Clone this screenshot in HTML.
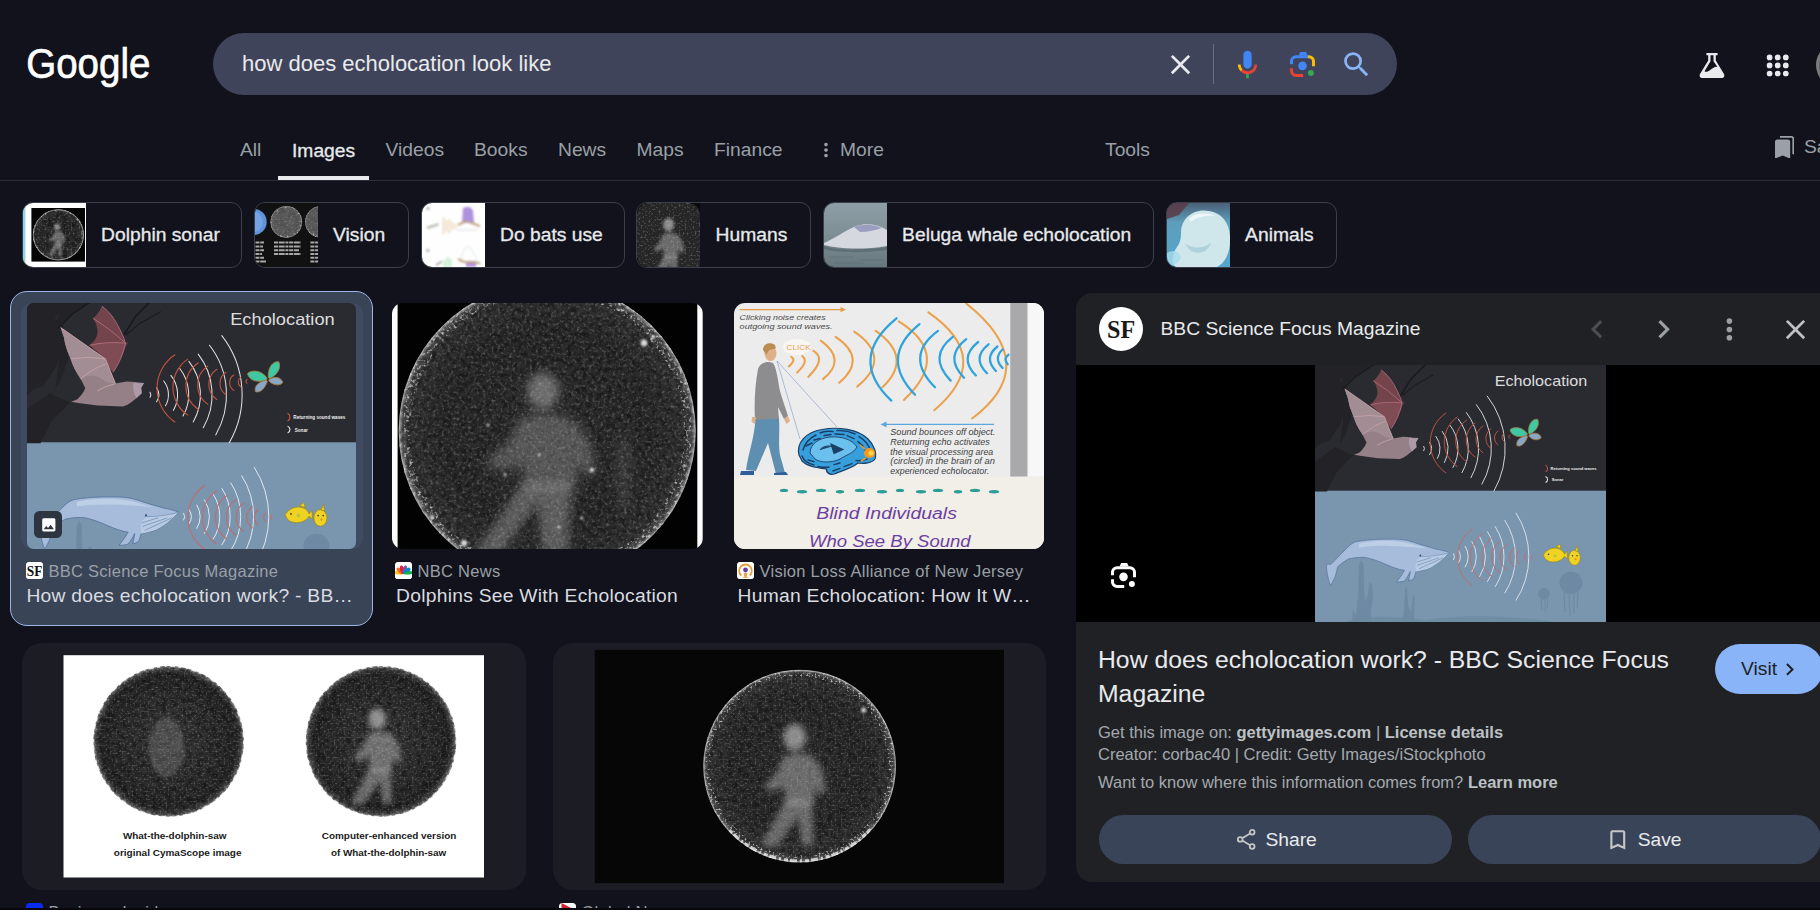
<!DOCTYPE html>
<html lang="en">
<head>
<meta charset="utf-8">
<title>how does echolocation look like - Google Search</title>
<style>
*{box-sizing:border-box;margin:0;padding:0}
html,body{width:1820px;height:910px;overflow:hidden;background:#11121b}
body{position:relative;font-family:"Liberation Sans",sans-serif;color:#e8eaed}
.abs{position:absolute}
svg{display:block}
#sb{position:absolute;left:213px;top:33px;width:1184px;height:62px;border-radius:31px;background:#40445a}
#sb .q{position:absolute;left:29px;top:0;line-height:61px;font-size:22px;color:#e8eaed;white-space:nowrap}
#sb .dv{position:absolute;left:1000px;top:11px;width:1px;height:40px;background:#6a6e80}
#tabs{position:absolute;left:0;top:120px;width:1820px;height:61px;border-bottom:1px solid #2b2d36}
#tabs span{position:absolute;top:17px;font-size:19.25px;line-height:25px;color:#9aa0a6;white-space:nowrap}
#tabs span.on{color:#e8eaed;top:17.8px;-webkit-text-stroke:.3px #e8eaed}
#tabs .ul{position:absolute;left:278px;top:56px;width:91px;height:4px;background:#e8eaed}
.chip{position:absolute;top:202px;height:66px;border:1px solid #3b3e4b;border-radius:11px;overflow:hidden;background:#11121b}
.chip .th{position:absolute;left:0;top:0;width:63px;height:64px;overflow:hidden}
.chip .tx{position:absolute;left:78.6px;top:0;line-height:63px;font-size:19.25px;color:#e8eaed;white-space:nowrap;-webkit-text-stroke:.3px #e8eaed}
.img{position:absolute;overflow:hidden;border-radius:11px}
.src{position:absolute;font-size:16.5px;letter-spacing:.27px;line-height:20px;color:#9aa0a6;white-space:nowrap}
.ttl{position:absolute;font-size:19.25px;letter-spacing:.27px;line-height:24px;color:#dadce0;white-space:nowrap;overflow:hidden;text-overflow:ellipsis}
.fav{position:absolute;width:17px;height:17px;border-radius:3.5px;overflow:hidden;background:#fff}
#sel{position:absolute;left:10px;top:291px;width:363px;height:335px;border-radius:17px;background:#394457;border:1.5px solid #9bb6e4}
.card{position:absolute;background:#1b1c24;border-radius:20px;overflow:hidden}
#panel{position:absolute;left:1076px;top:293px;width:800px;height:589px;background:#202124;border-radius:16px;overflow:hidden}
#panel .blk{position:absolute;left:0;top:72px;width:800px;height:257px;background:#000}
#panel .nm{position:absolute;left:84.5px;top:23px;font-size:19.25px;line-height:25px;color:#e8eaed;white-space:nowrap}
#panel .av{position:absolute;left:22.8px;top:13.7px;width:44.2px;height:44.2px;border-radius:50%;background:#fff}
#panel .h1{position:absolute;left:22px;top:350.2px;font-size:24.75px;line-height:33.4px;color:#e8eaed;white-space:nowrap}
#panel .meta{position:absolute;left:22px;font-size:16.5px;line-height:22px;color:#a4a9af;white-space:nowrap}
#panel .meta b{color:#bdc1c6;font-weight:700}
.btn{position:absolute;top:522px;height:49px;border-radius:25px;background:#394458}
.btn span{position:absolute;top:0;line-height:50.2px;font-size:19.25px;color:#e8eaed}
#visit{position:absolute;left:639px;top:351px;width:107.5px;height:50px;border-radius:25px;background:#8ab4f8}
#visit span{position:absolute;left:26px;top:0;line-height:49.5px;font-size:19.25px;color:#202124}
#bot{position:absolute;left:0;top:908px;width:1820px;height:2px;background:#08080c}
</style>
</head>
<body>
<svg width="0" height="0" style="position:absolute"><defs><filter id="nz" x="0" y="0" width="100%" height="100%" color-interpolation-filters="sRGB"><feTurbulence type="fractalNoise" baseFrequency=".34" numOctaves="2" seed="7" result="t"/><feColorMatrix in="t" type="matrix" values="0 0 0 0 1 0 0 0 0 1 0 0 0 0 1 3.4 0 0 0 -1.75" result="a"/><feComposite in="a" in2="SourceGraphic" operator="in"/></filter><filter id="nzf" x="0" y="0" width="100%" height="100%" color-interpolation-filters="sRGB"><feTurbulence type="fractalNoise" baseFrequency=".5" numOctaves="2" seed="11" result="t"/><feColorMatrix in="t" type="matrix" values="0 0 0 0 1 0 0 0 0 1 0 0 0 0 1 3.6 0 0 0 -1.85" result="a"/><feComposite in="a" in2="SourceGraphic" operator="in"/></filter><filter id="nzd" x="0" y="0" width="100%" height="100%" color-interpolation-filters="sRGB"><feTurbulence type="fractalNoise" baseFrequency=".2" numOctaves="2" seed="23" result="t"/><feColorMatrix in="t" type="matrix" values="0 0 0 0 0 0 0 0 0 0 0 0 0 0 0 0 2.6 0 0 -0.95" result="a"/><feComposite in="a" in2="SourceGraphic" operator="in"/></filter><filter id="bl" x="-30%" y="-30%" width="160%" height="160%"><feGaussianBlur stdDeviation="5"/></filter><filter id="bl2" x="-30%" y="-30%" width="160%" height="160%"><feGaussianBlur stdDeviation="1.8"/></filter><filter id="bl25" x="-30%" y="-30%" width="160%" height="160%"><feGaussianBlur stdDeviation="2.6"/></filter><filter id="bl3" x="-30%" y="-30%" width="160%" height="160%"><feGaussianBlur stdDeviation="3.2"/></filter><filter id="bl1" x="-30%" y="-30%" width="160%" height="160%"><feGaussianBlur stdDeviation=".9"/></filter><radialGradient id="disc" cx=".5" cy=".5" r=".5"><stop offset="0" stop-color="#2f2f2f"/><stop offset=".7" stop-color="#2a2a2a"/><stop offset=".93" stop-color="#343434"/><stop offset=".975" stop-color="#555"/><stop offset=".992" stop-color="#a0a0a0"/><stop offset="1" stop-color="#5a5a5a"/></radialGradient><radialGradient id="discw" cx=".5" cy=".5" r=".5"><stop offset="0" stop-color="#3a3a3a"/><stop offset=".7" stop-color="#2c2c2c"/><stop offset=".9" stop-color="#262626"/><stop offset=".97" stop-color="#4a4a4a"/><stop offset="1" stop-color="#9a9a9a"/></radialGradient><symbol id="man" viewBox="0 0 100 100" overflow="visible"><g fill="#c9c9c9"><ellipse cx="47.5" cy="35" rx="5.8" ry="6.8" opacity=".62"/><path d="M41 46C45 42.5 53 42.5 57.5 46 62 51 64 58 63 64 61.5 66 59 64 58 60L57 70 42.5 70 42 60C39 62 36 64 32.5 62 31.5 59 35 57 38 54Z" opacity=".42"/><path d="M42.5 68 56.5 68 57 91 51 91 49.5 76 38 92 30 91Z" opacity=".42"/></g></symbol></defs><symbol id="echo" viewBox="0 0 291 256" preserveAspectRatio="none"><rect width="291" height="126" fill="#2a2b31"/><rect y="125.2" width="291" height="131" fill="#7a96ae"/><g fill="#222227"><path d="M0 0H36L30 8 20 22 14 40 10 62 6 78 0 84Z"/><path d="M8 20 22 14 32 22 30 40 26 58 14 76 6 78 12 50Z"/><path d="M28 30 40 34 36 52 30 70 25 78 28 56Z"/><path d="M22 0H60L44 8 30 20 24 24 28 12Z"/><path d="M0 96 20 82 38 90 22 106 12 126H0Z"/></g><g stroke="#1a1a1e" fill="none" stroke-linecap="round"><path d="M110 0 96 14 86 30" stroke-width="1.6"/><path d="M118 10 100 20 88 30" stroke-width="1"/><path d="M58 0 40 12 28 24" stroke-width="1.4"/></g><path d="M66.3 5Q76 12 82.2 25.7 86 33 87.1 37.6L89.6 37.1 87.6 39.5Q84 52 76.2 63.4L72 58 69.3 51.5 55.4 39.6Q62 34 62.5 28 62 20 58.4 15.8 63 12 66.3 5Z" fill="#74444c"/><path d="M87.1 37.6Q70 36 55.4 39.6L69.3 51.5 72 58 76.2 63.4Q84 52 87.1 37.6Z" fill="#84505a" opacity=".7"/><path d="M66.3 5Q76 12 82.2 25.7 86 33 87.1 37.6Q84 52 76.2 63.4M87.1 37.6Q72 24 58.4 15.8M87.1 37.6Q70 36 55.4 39.6" stroke="#b06e78" stroke-width=".8" fill="none"/><path d="M29.7 23.8 69.3 51.5 78.2 73.3 88 71.5 96 72 100 73.5 103.5 72.8 101 77 101.5 82 97 86 92 90Q88 93 84.8 93.7L62.7 92.8 45 90.5 39 89.4 44.6 87.1Q50 82 51.5 77.2L47.5 69.3Q41 60 38.6 51.5 34 42 32.7 32.7Z" fill="#948086"/><path d="M29.7 23.8 69.3 51.5 78.2 73.3 70 72Q58 62 47.5 69.3 41 60 38.6 51.5 34 42 32.7 32.7Z" fill="#a18d93"/><path d="M29.7 23.8 69.3 51.5 78.2 73.3M69.3 51.5Q54 49 38.6 51.5M70 56Q58 60 47.5 69.3M78.2 73.3Q68 76 62 80" stroke="#c8a2a8" stroke-width=".8" fill="none"/><path d="M94 73Q99 72 103.5 72.8L101 77 101.5 82 97 86Q93 80 94 73Z" fill="#b2a0b0" opacity=".8"/><g fill="none" stroke="#e4e4e4" stroke-width="0.9" stroke-linecap="round" opacity="1.0"><path d="M108.8 81.0A4.0 4.0 0 0 1 108.8 85.4"/><path d="M114.6 77.0A11.0 11.0 0 0 1 114.6 89.4"/><path d="M120.9 71.1A19.6 19.6 0 0 1 122.5 93.0"/><path d="M127.3 66.1A27.7 27.7 0 0 1 129.5 97.0"/><path d="M135.1 60.1A37.5 37.5 0 0 1 138.0 102.0"/><path d="M143.2 53.7A47.9 47.9 0 0 1 147.0 107.2"/><path d="M151.4 47.4A58.2 58.2 0 0 1 155.9 112.3"/><path d="M161.4 39.5A70.9 70.9 0 0 1 166.9 118.7"/><path d="M172.3 31.0A84.8 84.8 0 0 1 178.9 125.6"/></g><g fill="none" stroke="#c4533d" stroke-width="0.95" stroke-linecap="round" opacity="1.0"><path d="M130.8 107.3A35.8 35.8 0 0 1 130.8 47.9"/><path d="M142.2 101.2A29.8 29.8 0 0 1 142.2 51.8"/><path d="M151.5 96.2A24.8 24.8 0 0 1 151.5 55.0"/><path d="M160.0 91.7A20.3 20.3 0 0 1 160.0 57.9"/><path d="M167.9 87.4A16.1 16.1 0 0 1 167.9 60.7"/><path d="M175.9 83.1A11.9 11.9 0 0 1 175.9 63.4"/><path d="M182.9 79.4A8.2 8.2 0 0 1 182.9 65.8"/><path d="M189.0 76.1A4.9 4.9 0 0 1 189.0 67.9"/><path d="M194.6 73.1A2.0 2.0 0 0 1 194.6 69.8"/></g><g stroke="#a87a42" stroke-width=".9" transform="translate(213 69.5) scale(.88) translate(-213 -69.5)"><path d="M212 68C206 60 196 60 192.5 64 195 72 204 73 212 70Z" fill="#3fc9a2"/><path d="M213.5 67C213 58 218 51 224 52 227 58 222 66 214.5 69Z" fill="#3fc9a2"/><path d="M211.5 70.5C204 72 199 76 200.5 82 206 84 211 77 212.5 71.5Z" fill="#89a6c4"/><path d="M214.5 69.5C221 66 227 68 228 73 224 77 217 75 214 71Z" fill="#89a6c4"/></g><text x="179.7" y="21.3" font-family="Liberation Sans, sans-serif" font-size="15.3" fill="#dedede" textLength="92.5" lengthAdjust="spacingAndGlyphs">Echolocation</text><path d="M230.5 99.5A4 4 0 0 1 230.5 106.5" stroke="#c9553f" stroke-width="1" fill="none"/><path d="M230.5 111A3.2 3.2 0 0 1 230.5 117" stroke="#e6e6e6" stroke-width="1" fill="none"/><text x="235.6" y="104.9" font-family="Liberation Sans, sans-serif" font-size="4.3" font-weight="700" fill="#ededed" textLength="46" lengthAdjust="spacingAndGlyphs">Returning sound waves</text><text x="236.8" y="116" font-family="Liberation Sans, sans-serif" font-size="4.3" font-weight="700" fill="#ededed" textLength="11.5" lengthAdjust="spacingAndGlyphs">Sonar</text><g fill="#6d89a3"><path d="M37 256 38 244 41 250 43.5 224 43.8 200 46 194 48.5 198 49 222 50 236 53 228 54.5 217 57 218 58 232 55.5 246 57 256Z"/><path d="M87 256 89 246 90.2 222 92 221 93.2 240 96 246 98 229 99.6 230 99 256Z"/><ellipse cx="256" cy="217" rx="11.5" ry="11"/><path d="M249 226 250 246M254 227 255 250M259 227 259 248M263 226 262 242" stroke="#6d89a3" stroke-width="1.2" fill="none"/><ellipse cx="229" cy="228" rx="5.8" ry="5.8"/><path d="M226 233 227 244M230 234 230 246M233 233 232 242" stroke="#6d89a3" stroke-width="1" fill="none"/><path d="M30 256C50 249 80 250 110 254 150 248 200 250 240 256Z" opacity=".75"/></g><path d="M133.9 186.7C130 185.2 125 184 120.6 183.3 114 181.2 108 179.6 103.3 178.1 99 176.6 95 175.4 91.8 174.6 86 173.6 80 173.3 74.5 173.5 68 173.4 62 173.5 57.2 174 51 174.4 45 175 39.9 176.3 36 178 33 181 30.6 183.8 27 187 24 190.4 21.4 193.1 19 195.6 17 197.6 15.6 198.6 14 198.2 12.6 198.2 11.6 198.8 11.2 203 12.4 212 15.6 219.6 17.4 217 19 213.6 20.3 210.4 21.4 207 22 204 22.6 201.1 26 198 30 195 34.1 193.1 40 191.6 46 191.4 51.4 191.9 58 193.4 64 195.6 68.7 197.7 73 199.6 77 201.2 80.2 202.3 83 203.4 86.5 204.2 89.5 204.6 87 209 84 213 81.4 216.1 84.5 216.4 87.5 215.8 89.5 215 92 212 93.8 209 95.2 205.7 94.8 209 94.2 212.4 93.5 215 95.6 214.6 97.4 213.8 98.7 212.7 99.8 210.4 100.6 208 101 205.7 106 205 110.6 204 114.8 202.3 119 199.8 123 197.2 126.4 194.2 129.4 191.6 132 189.2 133.9 186.7Z" fill="#a7bcda" stroke="#52719b" stroke-width=".7" stroke-linejoin="round"/><path d="M44 178C52 175.6 66 174.6 78 175.2 90 176 102 179.4 112 182.6 100 181.6 86 180.4 74 180.2 62 180 52 180.6 44 182Z" fill="#c3d5ea" opacity=".75"/><path d="M101 205.7C106 205 110.6 204 114.8 202.3 119 199.8 123 197.2 126.4 194.2 129.4 191.6 132 189.2 133.9 186.7 128 188.6 120 189.6 112 189.8 108 190.2 104.6 191.6 102 194 100 198 100.4 202 101 205.7Z" fill="#b9cbe4"/><path d="M104 190.8C112 191 124 189.8 133.4 187.2M104 203 128 192M102 199.6 124 192M101.6 196.4 116 191.8" stroke="#6181ab" stroke-width=".55" fill="none"/><circle cx="105.3" cy="189.6" r=".9" fill="#2c456b"/><g fill="none" stroke="#e6ebf1" stroke-width="0.85" stroke-linecap="round" opacity="1.0"><path d="M138.6 188.0A5.2 5.2 0 0 1 138.6 193.8"/><path d="M143.4 184.7A11.0 11.0 0 0 1 143.4 197.1"/><path d="M150.2 180.6A19.0 19.0 0 0 1 150.2 201.2"/><path d="M157.0 176.1A27.1 27.1 0 0 1 157.0 205.7"/><path d="M164.7 171.1A36.3 36.3 0 0 1 164.7 210.7"/><path d="M172.5 166.1A45.6 45.6 0 0 1 172.5 215.7"/><path d="M180.3 161.1A54.8 54.8 0 0 1 180.3 220.7"/><path d="M189.9 154.8A66.3 66.3 0 0 1 189.9 227.0"/><path d="M201.1 147.5A79.6 79.6 0 0 1 201.1 234.3"/></g><g fill="none" stroke="#c26a6c" stroke-width="0.95" stroke-linecap="round" opacity="1.0"><path d="M157.3 219.6A33.8 33.8 0 0 1 157.3 163.4"/><path d="M167.6 215.0A28.3 28.3 0 0 1 167.6 168.0"/><path d="M176.9 210.8A23.3 23.3 0 0 1 176.9 172.2"/><path d="M184.8 207.3A19.1 19.1 0 0 1 184.8 175.7"/><path d="M191.8 204.2A15.3 15.3 0 0 1 191.8 178.8"/><path d="M199.3 200.8A11.3 11.3 0 0 1 199.3 182.2"/><path d="M204.8 198.4A8.3 8.3 0 0 1 204.8 184.6"/><path d="M211.4 195.4A4.7 4.7 0 0 1 211.4 187.6"/><path d="M216.5 193.2A2.0 2.0 0 0 1 216.5 189.8"/></g><g stroke="#9a8410" stroke-width=".6"><path d="M228.5 189C232 183 240 180.5 246 184 248 185.5 249 187 249.5 188.5L252 185.5 252.5 193 249.5 190.5C247 195 240 197.5 234 195.5 231 194.5 229 192 228.5 189Z" fill="#f0d322"/><path d="M241 181 245 178.5 246 183Z" fill="#f0d322"/><ellipse cx="259.5" cy="192" rx="5.8" ry="7.4" fill="#f0d322"/><path d="M260 185 262.5 180 263 186Z" fill="#f0d322"/></g><circle cx="233.5" cy="188.5" r=".8" fill="#333"/><circle cx="257.5" cy="190" r=".7" fill="#333"/><circle cx="262" cy="190" r=".7" fill="#333"/><circle cx="240" cy="190" r="1.6" fill="#9fc04a" opacity=".7"/><circle cx="260.5" cy="193.5" r="1" fill="#d9722a" opacity=".8"/></symbol></svg>
<svg class="abs" style="left:24px;top:40px" width="130" height="52" viewBox="0 0 130 52"><text x="2.2" y="38.1" font-family="Liberation Sans, sans-serif" font-size="42.8" fill="#fff" stroke="#fff" stroke-width=".7" textLength="124.2" lengthAdjust="spacingAndGlyphs">Google</text></svg>
<div id="sb"><div class="q">how does echolocation look like</div><div class="dv"></div></div>
<svg class="abs" style="left:1164px;top:48px" width="33" height="33" viewBox="0 0 24 24" ><path d="M19 6.41L17.59 5 12 10.59 6.41 5 5 6.41 10.59 12 5 17.59 6.41 19 12 13.41 17.59 19 19 17.59 13.41 12z" fill="#e8eaed"/></svg><svg class="abs" style="left:1231px;top:48px" width="33" height="33" viewBox="0 0 24 24" ><path fill="#4285f4" d="m12 15c1.66 0 3-1.31 3-2.97v-7.02c0-1.66-1.34-3.01-3-3.01s-3 1.34-3 3.01v7.02c0 1.66 1.34 2.97 3 2.97z"/><path fill="#34a853" d="m11 18.08h2v3.92h-2z"/><path fill="#fbbc04" d="m7.05 16.87c-1.27-1.33-2.05-2.83-2.05-4.87h2c0 1.45 0.56 2.42 1.47 3.38v0.32l-1.15 1.18z"/><path fill="#ea4335" d="m12 16.93a4.97 5.25 0 0 1 -3.54 -1.55l-1.41 1.49c1.26 1.34 3.02 2.13 4.95 2.13 3.87 0 6.99-2.92 6.99-7h-1.99c0 2.92-2.24 4.93-5 4.93z"/></svg><svg class="abs" style="left:1289.8px;top:51.8px" width="25.6" height="25.4" viewBox="0 0 25.6 25.4" ><g fill="none" stroke-width="3"><path d="M1.5 12.3V9.3A4.6 4.6 0 0 1 6.1 4.7H18" stroke="#4285f4"/><path d="M17.9 4.7H18.9A4.6 4.6 0 0 1 23.5 9.3V14.2" stroke="#fbbc04"/><path d="M1.5 16.2V18.9A4.6 4.6 0 0 0 6.1 23.5H13.2" stroke="#ea4335"/></g><path d="M8.5 3.4 10.2 0H16.1L17.8 3.4Z" fill="#4285f4"/><circle cx="12.5" cy="13.85" r="4.3" fill="#4285f4"/><circle cx="20.9" cy="20.9" r="3" fill="#34a853"/></svg><svg class="abs" style="left:1339.7px;top:47.9px" width="33" height="33" viewBox="0 0 24 24" ><path d="M15.5 14h-.79l-.28-.27A6.471 6.471 0 0 0 16 9.5 6.5 6.5 0 1 0 9.5 16c1.61 0 3.09-.59 4.23-1.57l.27.28v.79l5 4.99L20.49 19l-4.99-5zm-6 0C7.01 14 5 11.99 5 9.5S7.01 5 9.5 5 14 7.01 14 9.5 11.99 14 9.5 14z" fill="#8ab4f8"/></svg><svg class="abs" style="left:1698.5px;top:53px" width="26" height="25.2" viewBox="0 0 26 25" ><path d="M7.4 0H18.6V2.2H16.8V7.4L25 21C26 22.9 24.8 25 22.7 25H3.3C1.2 25 0 22.9 1 21L9.2 7.4V2.2H7.4Z" fill="#e8eaed"/><path d="M11.5 2.2H14.5V8.1L18.3 13.7C15.4 13.4 13.2 15.4 10.9 17.2 9.2 18.6 7.2 19.2 5.5 18.2L11.5 8.1Z" fill="#11121b"/></svg><svg class="abs" style="left:0;top:0" width="1820" height="100" viewBox="0 0 1820 100"><g fill="#e8eaed"><circle cx="1769.6" cy="57.4" r="2.85"/><circle cx="1777.7" cy="57.4" r="2.85"/><circle cx="1785.8" cy="57.4" r="2.85"/><circle cx="1769.6" cy="65.45" r="2.85"/><circle cx="1777.7" cy="65.45" r="2.85"/><circle cx="1785.8" cy="65.45" r="2.85"/><circle cx="1769.6" cy="73.5" r="2.85"/><circle cx="1777.7" cy="73.5" r="2.85"/><circle cx="1785.8" cy="73.5" r="2.85"/></g></svg><div class="abs" style="left:1815.8px;top:43.3px;width:44px;height:44px;border-radius:50%;background:#7d7d7d;overflow:hidden"><div class="abs" style="left:3px;top:4px;width:38px;height:38px;border-radius:50%;background:#5b5d61"></div></div>
<div id="tabs"><span style="left:240px">All</span><span class="on" style="left:292px">Images</span><span style="left:385.5px">Videos</span><span style="left:474px">Books</span><span style="left:558px">News</span><span style="left:636.5px">Maps</span><span style="left:714px">Finance</span><span style="left:840px">More</span><span style="left:1105px">Tools</span><span style="left:1804px;top:13.7px">Saved</span><div class="ul"></div></div>
<svg class="abs" style="left:814.7px;top:138.9px" width="22" height="22" viewBox="0 0 24 24" ><path d="M12 8c1.1 0 2-.9 2-2s-.9-2-2-2-2 .9-2 2 .9 2 2 2zm0 2c-1.1 0-2 .9-2 2s.9 2 2 2 2-.9 2-2-.9-2-2-2zm0 6c-1.1 0-2 .9-2 2s.9 2 2 2 2-.9 2-2-.9-2-2-2z" fill="#9aa0a6"/></svg><svg class="abs" style="left:1774.7px;top:135.6px" width="19.1" height="22.9" viewBox="0 0 20 24" ><path d="M5.2 0H17.4C18.8 0 20 1.2 20 2.6V19.6L18.2 18.6V2.6C18.2 2.1 17.9 1.8 17.4 1.8H5.2Z" fill="#9aa0a6"/><path d="M2.3 3.8H13.6C14.9 3.8 15.9 4.8 15.9 6.1V23.8L8 20.4 0 23.8V6.1C0 4.8 1 3.8 2.3 3.8Z" fill="#9aa0a6"/></svg>
<div class="chip" style="left:21.5px;width:220px"><div class="th"><svg width="63" height="64" viewBox="0 0 63 64"><rect width="63" height="64" fill="#fff"/><rect width="2.4" height="64" fill="#8fd3e8"/><rect x="8.4" y="5" width="53.6" height="53.6" fill="#050505"/><circle cx="35.4" cy="31.8" r="25.6" fill="url(#disc)"/><circle cx="35.4" cy="31.8" r="25.6" fill="#000" filter="url(#nzd)" opacity=".4"/><circle cx="35.4" cy="31.8" r="25.6" fill="#fff" filter="url(#nzf)" opacity=".2"/><use href="#man" x="9.80" y="6.20" width="51.20" height="51.20" filter="url(#bl1)" opacity="1.3"/><circle cx="35.4" cy="31.8" r="24.60" fill="none" stroke="#fff" stroke-width="2.00" filter="url(#nzf)" opacity=".55"/><circle cx="35.4" cy="31.8" r="25.00" fill="none" stroke="#d8d8d8" stroke-width="1" opacity=".45"/></svg></div><div class="tx">Dolphin sonar</div></div>
<div class="chip" style="left:253.5px;width:155px"><div class="th"><svg width="63" height="64" viewBox="0 0 63 64"><rect width="63" height="64" fill="#111"/><circle cx="-1.6" cy="18.9" r="13.3" fill="#5f93dc"/><circle cx="-2.6" cy="18.9" r="10.5" fill="#7fa8e6" opacity=".7"/><circle cx="31.3" cy="18.9" r="15.9" fill="url(#disc)"/><circle cx="31.3" cy="18.9" r="15.9" fill="#000" filter="url(#nzd)" opacity=".4"/><circle cx="31.3" cy="18.9" r="15.9" fill="#fff" filter="url(#nzf)" opacity=".2"/><circle cx="31.3" cy="18.9" r="14.90" fill="none" stroke="#fff" stroke-width="2.00" filter="url(#nzf)" opacity=".55"/><circle cx="31.3" cy="18.9" r="15.30" fill="none" stroke="#d8d8d8" stroke-width="1" opacity=".45"/><circle cx="31.3" cy="18.9" r="14.6" fill="#9a9a9a" opacity=".42"/><circle cx="65.9" cy="18.9" r="15.9" fill="url(#disc)"/><circle cx="65.9" cy="18.9" r="15.9" fill="#000" filter="url(#nzd)" opacity=".4"/><circle cx="65.9" cy="18.9" r="15.9" fill="#fff" filter="url(#nzf)" opacity=".2"/><circle cx="65.9" cy="18.9" r="14.90" fill="none" stroke="#fff" stroke-width="2.00" filter="url(#nzf)" opacity=".55"/><circle cx="65.9" cy="18.9" r="15.30" fill="none" stroke="#d8d8d8" stroke-width="1" opacity=".45"/><circle cx="65.9" cy="18.9" r="14.6" fill="#9a9a9a" opacity=".42"/><g stroke="#c4c4c4" stroke-width="2" opacity=".85" stroke-dasharray="4 .7 6 .7 3 .7"><path d="M19 39.6H46M19 43.4H46M19 47.2H44M19 51H46"/><path d="M.5 39.6H9M.5 43.4H8M.5 47.2H9M.5 51H7M.5 54.8H9M.5 58.6H11"/><path d="M55.4 39.6H63M55.4 43.4H63M55.4 47.2H63M55.4 51H63M55.4 54.8H63M55.4 58.6H63"/></g></svg></div><div class="tx">Vision</div></div>
<div class="chip" style="left:420.5px;width:204px"><div class="th"><svg width="63" height="64" viewBox="0 0 63 64"><rect width="63" height="64" fill="#fefefe"/><g filter="url(#bl1)" opacity=".78"><g fill="none" stroke="#dcb070" stroke-width="1"><path d="M21.5 14V31M24.5 17V29M27.5 16V30M30.5 19V27M33.5 21V26"/></g><path d="M41 5.5C44 3 50 3.5 51 8L52 20H40Z" fill="#9672d4"/><path d="M36 22 44 18 58 23" fill="none" stroke="#b08a5a" stroke-width="2"/><path d="M35 27H56" stroke="#b9b0c8" stroke-width="1" stroke-dasharray="1.5 1"/><path d="M4 24 16 20 17 22.5 6 26Z" fill="#8a8a80" opacity=".7"/><circle cx="6" cy="5.5" r="1.8" fill="#a8a8b0"/><circle cx="5.8" cy="47.5" r="1.8" fill="#a8a8b0"/><path d="M38 60C41 46 45 41 48 44 52 49 54 56 56 60" fill="none" stroke="#cfe6e0" stroke-width="1"/><g stroke="#9ce0a8" stroke-width="1.6"><path d="M22.5 64V57M25.5 64V54M28.5 64V56"/></g><path d="M44 58H54V64H44Z" fill="#a07ad8"/><path d="M36 56 42 59 58 60" fill="none" stroke="#b08a5a" stroke-width="2.2"/><path d="M14 62 20 58.5" stroke="#8a8a80" stroke-width="1.6"/></g></svg></div><div class="tx">Do bats use</div></div>
<div class="chip" style="left:636px;width:174.5px"><div class="th"><svg width="63" height="64" viewBox="0 0 63 64"><rect width="63" height="64" fill="#262626"/><rect width="63" height="64" fill="#fff" filter="url(#nzf)" opacity=".22"/><use href="#man" x="-14" y="-12" width="96" height="96" filter="url(#bl2)" opacity="1.1"/><path d="M0 0H10A12 12 0 0 0 0 12Z M63 0V10A12 12 0 0 0 52 0Z M0 64V54A12 12 0 0 0 10 64Z" fill="#0a0a0a"/></svg></div><div class="tx">Humans</div></div>
<div class="chip" style="left:822.5px;width:331px"><div class="th"><svg width="63" height="64" viewBox="0 0 63 64"><defs><linearGradient id="sea" x1="0" y1="0" x2="0" y2="1"><stop offset="0" stop-color="#8e9ea6"/><stop offset=".45" stop-color="#7f9097"/><stop offset="1" stop-color="#66777d"/></linearGradient></defs><rect width="63" height="64" fill="url(#sea)"/><path d="M0 40C10 36 20 28 32 23 42 19.5 54 21 63 27V44C50 46 30 47 14 46 8 45.6 3 44 0 43Z" fill="#d5d8de"/><path d="M30 24C38 20.5 50 21 58 25 52 27 44 29 36 29Z" fill="#8f8fb8" opacity=".8"/><path d="M0 42C14 46 40 47 63 43V47C40 50 14 50 0 46Z" fill="#596a70" opacity=".8"/><path d="M4 54H30M36 57H60M10 60H40" stroke="#5b6c72" stroke-width=".8" opacity=".6"/></svg></div><div class="tx">Beluga whale echolocation</div></div>
<div class="chip" style="left:1165.5px;width:171px"><div class="th"><svg width="63" height="64" viewBox="0 0 63 64"><defs><linearGradient id="aq" x1="0" y1="0" x2="0" y2="1"><stop offset="0" stop-color="#4a6076"/><stop offset=".3" stop-color="#5e9dbb"/><stop offset="1" stop-color="#55a6cf"/></linearGradient></defs><rect width="63" height="64" fill="url(#aq)"/><path d="M0 0H22L12 12 0 16Z" fill="#5a3a48" opacity=".85"/><path d="M14 30C14 14 28 5 42 8 56 10 64 22 63 38 63 50 58 60 50 64H8C4 58 6 50 10 44 13 40 14 36 14 30Z" fill="#cfe6ea"/><path d="M22 16C28 10 40 9 48 13 42 12 30 13 24 19Z" fill="#eef7f8"/><path d="M18 40C24 46 36 46 44 40 40 52 24 54 18 40Z" fill="#9fc8d4" opacity=".7"/><path d="M0 50C6 46 12 48 14 54 12 60 6 64 0 64Z" fill="#a6dcec" opacity=".8"/></svg></div><div class="tx">Animals</div></div>
<div id="sel"></div>
<div class="img" style="left:21px;top:302.5px;width:341.5px;height:246.5px;background:#3f4b61"></div>
<div class="img" style="left:27.3px;top:302.5px;width:329px;height:246.5px;border-radius:6.5px"><svg width="329" height="246.5" viewBox="0 2.2 291 217.7" preserveAspectRatio="none"><use href="#echo" x="0" y="0" width="291" height="256"/></svg><div class="abs" style="left:7.2px;top:208.5px;width:27.8px;height:26.8px;border-radius:5.5px;background:#2d3540"></div><svg class="abs" style="left:12.3px;top:213.1px" width="17.6" height="17.6" viewBox="0 0 24 24"><path d="M21 19V5c0-1.1-.9-2-2-2H5c-1.1 0-2 .9-2 2v14c0 1.1.9 2 2 2h14c1.1 0 2-.9 2-2zM8.5 13.5l2.5 3.01L14.5 12l4.5 6H5l3.500-4.500z" fill="#fff"/></svg></div>
<div class="img" style="left:392px;top:302.5px;width:310.5px;height:246.5px"><svg width="310.5" height="246.5" viewBox="0 0 310.5 246.5"><rect width="310.5" height="246.5" fill="#020202"/><rect width="5.6" height="246.5" fill="#fdfdfd"/><rect x="305.3" width="5.4" height="246.5" fill="#fdfdfd"/><circle cx="155.2" cy="128" r="148.6" fill="url(#disc)"/><circle cx="155.2" cy="128" r="148.6" fill="#000" filter="url(#nzd)" opacity=".4"/><circle cx="155.2" cy="128" r="148.6" fill="#fff" filter="url(#nz)" opacity=".2"/><circle cx="155.2" cy="128" r="143.03" fill="none" stroke="#fff" stroke-width="11.14" filter="url(#nz)" opacity=".55"/><circle cx="155.2" cy="128" r="148.00" fill="none" stroke="#d8d8d8" stroke-width="1" opacity=".45"/><g filter="url(#bl)" fill="#cfcfcf"><ellipse cx="151" cy="88" rx="16" ry="18" opacity=".42"/><path d="M126 118C138 108 170 108 184 120 198 134 204 152 202 170 196 176 190 170 186 160L184 186 132 186 130 160C120 168 108 170 96 164 94 154 108 148 118 138Z" opacity=".27"/><path d="M130 180 180 180 176 250 150 250 146 200 108 250 84 250Z" opacity=".32"/><ellipse cx="232" cy="170" rx="8" ry="40" opacity=".12"/></g><g fill="#fff" filter="url(#bl1)" opacity=".8"><circle cx="252" cy="40" r="3.4"/><circle cx="261" cy="34" r="2"/><circle cx="96" cy="122" r="1.6"/><circle cx="200" cy="167" r="2.2"/><circle cx="113" cy="172" r="1.4"/><circle cx="147" cy="152" r="1.5"/><circle cx="40" cy="214" r="2"/><circle cx="72" cy="240" r="3"/><circle cx="190" cy="215" r="1.5"/><circle cx="167" cy="224" r="1.4"/></g></svg></div>
<div class="img" style="left:734px;top:302.5px;width:310px;height:246.5px"><svg width="310" height="246.5" viewBox="0 0 310 246.5"><rect width="310" height="246.5" fill="#ececec"/><rect x="293" width="17" height="174" fill="#f7f7f7"/><rect y="173.5" width="310" height="74" fill="#f2eee8"/><rect x="276.3" y="0" width="17.2" height="173.5" fill="#a9a9ac"/><path d="M5.7 6.6H108" stroke="#e89a45" stroke-width="1.2"/><path d="M106.5 4 112 6.6 106.5 9.2Z" fill="#e89a45"/><text font-family="Liberation Sans, sans-serif" font-style="italic" font-size="8.1" fill="#4a4a4a"><tspan x="5.6" y="16.8" textLength="86" lengthAdjust="spacingAndGlyphs">Clicking noise creates</tspan><tspan x="5.6" y="26" textLength="93" lengthAdjust="spacingAndGlyphs">outgoing sound waves.</tspan></text><ellipse cx="36.5" cy="50.5" rx="6" ry="7.6" fill="#e0b088"/><path d="M29 47C29 41 35 38.5 40.5 41.5 42 43.5 42 45 41 46 37 45.5 33.5 47.5 32.5 52Z" fill="#b98d52"/><path d="M24 66C26 60 33 57.5 39 60 42 64 44 76 45.5 86 48 96 52 106 54 113L50 116 44 104 45 116 21 118C20 100 21 82 24 66Z" fill="#8d8d90"/><path d="M50 116 54 113 56 118 52.5 121Z" fill="#e0b088"/><path d="M18 114 22 114 21 121 17.5 119Z" fill="#e0b088"/><path d="M21.5 117 45 115.5C46 130 44 140 46 152L51 170 42 171 34 140 22 168 12 167C14 152 20 136 21.5 117Z" fill="#5f8fb0"/><path d="M7 168 20 168 20 172 6 172Z" fill="#2f5f9a"/><path d="M40 170 52 169 54 172 40 172Z" fill="#2f5f9a"/><path d="M43 58 103 124M43 58 66 136" stroke="#7f96c8" stroke-width=".6" fill="none"/><ellipse cx="63" cy="44" rx="14" ry="8" fill="#f8f6f2"/><text x="52.6" y="46.6" font-family="Liberation Sans, sans-serif" font-size="7.6" fill="#eba04a" textLength="24" lengthAdjust="spacingAndGlyphs">CLICK</text><g fill="none" stroke="#eba04a" stroke-width="2.05" stroke-linecap="round"><path d="M57.1 53.9Q62.7 56.5 54.9 63.5"/><path d="M68.3 53.1Q75.3 58.3 63.1 69.5"/><path d="M79.4 47.9Q93.0 55.7 74.2 73.9"/><path d="M86.8 37.6Q113.3 56.8 89.0 76.1"/><path d="M101.6 33.9Q133.9 55.4 105.3 79.8"/><path d="M120.2 28.7Q158.8 54.6 123.2 83.6"/><path d="M141.7 27.9Q179.9 54.6 148.4 84.3"/><path d="M164.7 18.3Q218.5 51.7 169.9 96.9"/><path d="M194.4 9.4Q261.1 55.4 200.3 107.3"/><path d="M232.2 0.5Q309.4 61.7 238.1 115.5"/></g><g fill="none" stroke="#2fa3dc" stroke-width="2.3" stroke-linecap="round"><path d="M274.5 51.7Q268.9 55.7 273.7 61.3"/><path d="M268.6 46.5Q259.1 55.0 268.6 65.0"/><path d="M263.4 43.5Q249.3 55.0 261.9 68.0"/><path d="M254.5 41.3Q237.4 55.0 253.0 70.2"/><path d="M244.1 39.0Q224.4 55.0 241.8 72.4"/><path d="M232.2 36.1Q209.6 53.9 230.0 74.7"/><path d="M218.8 33.9Q193.3 53.5 216.6 77.6"/><path d="M204.0 27.9Q169.9 53.1 201.0 84.3"/><path d="M185.5 21.2Q144.7 54.3 181.0 91.7"/><path d="M162.5 15.3Q113.1 55.7 157.3 97.6"/></g><path d="M151 121.4H260" stroke="#5aa7de" stroke-width="1.2"/><path d="M152.5 118.6 146.5 121.4 152.5 124.2Z" fill="#5aa7de"/><text font-family="Liberation Sans, sans-serif" font-style="italic" font-size="8.3" fill="#3f3f3f"><tspan x="156.3" y="131.8" textLength="105" lengthAdjust="spacingAndGlyphs">Sound bounces off object.</tspan><tspan x="156.3" y="141.7" textLength="99.5" lengthAdjust="spacingAndGlyphs">Returning echo activates</tspan><tspan x="156.3" y="151.6" textLength="103" lengthAdjust="spacingAndGlyphs">the visual processing area</tspan><tspan x="156.3" y="161.4" textLength="104.5" lengthAdjust="spacingAndGlyphs">(circled) in the brain of an</tspan><tspan x="156.3" y="171.3" textLength="99" lengthAdjust="spacingAndGlyphs">experienced echolocator.</tspan></text><path d="M65 152C62 140 72 129 88 126.5 104 123.5 124 126 134 136 140 142 143 150 141 156 138 160 130 161 124 160 118 165 108 168 100 171 96 172 92 170 92.5 166 84 165 74 164 68 158Z" fill="#379fdc" stroke="#1b3f66" stroke-width="1.2"/><path d="M76 150C76 141 85 135 96 134 108 133 119 137 123 144 120 150 112 152 106 156 98 160 87 160 81 156Z" fill="#6cc0ee" stroke="#1b3f66" stroke-width=".9"/><g fill="none" stroke="#1b3f66" stroke-width="1.5" stroke-linecap="round"><path d="M69 147C71 140 76 135 82 132M86 130C90 128 95 128 99 128.6M103 127.6C109 127 116 128.6 121 131M125 133.6C130 136.6 134 141 136 146M68 153C70 158 75 161 80 162M84 163.4C88 164.4 92 164.6 95 164M99 168 106 165.4M110 163.6 118 160.6M122 157.6C126 157.8 130 157.4 133 156"/><path d="M72 143 78 140M80 137 86 135.6M90 132.6 97 131.6M101 131 110 131.6M113 132.6 120 135.6M124 138.6 129 143M131 147 133 152M74 157 80 158.6M100 161.6 106 160"/></g><path d="M97 141 109 146.4 100 150.4Z M86 147C89 143.6 94 142.6 98 143.4" fill="#1b3f66" stroke="#1b3f66" stroke-width="1.1"/><ellipse cx="135.5" cy="150" rx="5.5" ry="5" fill="#f29a1f"/><circle cx="137" cy="150" r="2.6" fill="#ffd24a"/><path d="M126 142 131 146M127 158 132 155" stroke="#f29a1f" stroke-width="1.6"/><g fill="#2b9c96"><ellipse cx="50" cy="187.4" rx="4.2" ry="1.7"/><ellipse cx="68" cy="188.8" rx="5.2" ry="1.7"/><ellipse cx="87" cy="187.4" rx="5.2" ry="1.7"/><ellipse cx="106" cy="188.8" rx="4.2" ry="1.7"/><ellipse cx="126" cy="187.4" rx="5.2" ry="1.7"/><ellipse cx="148" cy="188.8" rx="5.2" ry="1.7"/><ellipse cx="166" cy="187.4" rx="4.2" ry="1.7"/><ellipse cx="187" cy="188.8" rx="5.2" ry="1.7"/><ellipse cx="204" cy="187.4" rx="5.2" ry="1.7"/><ellipse cx="224" cy="188.8" rx="4.2" ry="1.7"/><ellipse cx="241" cy="187.4" rx="5.2" ry="1.7"/><ellipse cx="260" cy="188.8" rx="5.2" ry="1.7"/></g><text font-family="Liberation Sans, sans-serif" font-style="italic" font-size="17.2" fill="#6b3fa0"><tspan x="82.3" y="216.2" textLength="140.6" lengthAdjust="spacingAndGlyphs">Blind Individuals</tspan><tspan x="75" y="243.6" textLength="161.6" lengthAdjust="spacingAndGlyphs">Who See By Sound</tspan></text></svg></div>
<div class="fav" style="left:26px;top:562px"><svg width="17" height="17" viewBox="0 0 17 17"><rect width="17" height="17" fill="#fff"/><text x="8.5" y="13.6" font-family="Liberation Serif, serif" font-size="14.5" font-weight="700" fill="#111" text-anchor="middle" textLength="15.5" lengthAdjust="spacingAndGlyphs">SF</text></svg></div><div class="src" style="left:48.4px;top:560.6px">BBC Science Focus Magazine</div><div class="ttl" style="left:26.4px;top:584px;width:330px">How does echolocation work? - BBC Science Focus Magazine</div>
<div class="fav" style="left:395px;top:562px"><svg width="17" height="17" viewBox="0 0 17 17"><rect width="17" height="17" fill="#fff"/><ellipse cx="8.5" cy="7.6" rx="2" ry="4.3" fill="#fccc12" transform="rotate(-75 8.5 12.6)"/><ellipse cx="8.5" cy="7.6" rx="2" ry="4.3" fill="#f37021" transform="rotate(-45 8.5 12.6)"/><ellipse cx="8.5" cy="7.6" rx="2" ry="4.3" fill="#ef1541" transform="rotate(-15 8.5 12.6)"/><ellipse cx="8.5" cy="7.6" rx="2" ry="4.3" fill="#6460aa" transform="rotate(15 8.5 12.6)"/><ellipse cx="8.5" cy="7.6" rx="2" ry="4.3" fill="#0089d0" transform="rotate(45 8.5 12.6)"/><ellipse cx="8.5" cy="7.6" rx="2" ry="4.3" fill="#0db14b" transform="rotate(75 8.5 12.6)"/><path d="M0 12.6H17V17H0Z" fill="#fff"/></svg></div><div class="src" style="left:417.6px;top:560.6px">NBC News</div><div class="ttl" style="left:396px;top:584px;width:306px">Dolphins See With Echolocation</div>
<div class="fav" style="left:737px;top:562px"><svg width="17" height="17" viewBox="0 0 17 17"><rect width="17" height="17" fill="#fff"/><circle cx="8.5" cy="8.8" r="6.3" fill="none" stroke="#e7a13c" stroke-width="1.8"/><path d="M8.5 8.8 3 15H14Z" fill="#fff"/><circle cx="8.5" cy="8" r="2.4" fill="#6b3fa0"/><path d="M6.6 11H10.4L9.6 15H7.4Z" fill="#e7a13c"/></svg></div><div class="src" style="left:759.5px;top:560.6px">Vision Loss Alliance of New Jersey</div><div class="ttl" style="left:737.5px;top:584px;width:298px">Human Echolocation: How It Works</div>
<div class="card" style="left:21.5px;top:643px;width:504px;height:247px"><svg class="abs" style="left:0;top:0" width="504" height="247" viewBox="0 0 504 247"><rect x="41.5" y="12.200000000000045" width="420.5" height="222.3" fill="#fff"/><circle cx="146.6" cy="98.39999999999998" r="75.3" fill="url(#discw)"/><circle cx="146.6" cy="98.39999999999998" r="75.3" fill="#000" filter="url(#nzd)" opacity=".4"/><circle cx="146.6" cy="98.39999999999998" r="75.3" fill="#fff" filter="url(#nzf)" opacity=".2"/><circle cx="359.0" cy="98.39999999999998" r="75.3" fill="url(#discw)"/><circle cx="359.0" cy="98.39999999999998" r="75.3" fill="#000" filter="url(#nzd)" opacity=".4"/><circle cx="359.0" cy="98.39999999999998" r="75.3" fill="#fff" filter="url(#nzf)" opacity=".2"/><use href="#man" x="283.70" y="23.10" width="150.60" height="150.60" filter="url(#bl25)" opacity="1.0"/><circle cx="146.6" cy="98.39999999999998" r="75.6" fill="none" stroke="#fff" stroke-width="2.4" stroke-dasharray="3 5 1.5 4 5 3" opacity=".75"/><circle cx="146.6" cy="98.39999999999998" r="73" fill="none" stroke="#8a8a8a" stroke-width="1.5" stroke-dasharray="2 6 1 7" opacity=".5"/><circle cx="359.0" cy="98.39999999999998" r="75.6" fill="none" stroke="#fff" stroke-width="2.4" stroke-dasharray="3 5 1.5 4 5 3" opacity=".75"/><circle cx="359.0" cy="98.39999999999998" r="73" fill="none" stroke="#8a8a8a" stroke-width="1.5" stroke-dasharray="2 6 1 7" opacity=".5"/><ellipse cx="144.6" cy="104.39999999999998" rx="18" ry="30" fill="#9a9a9a" opacity=".28" filter="url(#bl2)"/><text font-family="Liberation Sans, sans-serif" font-size="9.4" font-weight="700" fill="#1a1a1a" text-anchor="middle" x="152.7" y="195.70000000000005" textLength="103.6" lengthAdjust="spacingAndGlyphs">What-the-dolphin-saw</text><text font-family="Liberation Sans, sans-serif" font-size="9.4" font-weight="700" fill="#1a1a1a" text-anchor="middle" x="155.7" y="212.89999999999998" textLength="127.7" lengthAdjust="spacingAndGlyphs">original CymaScope image</text><text font-family="Liberation Sans, sans-serif" font-size="9.4" font-weight="700" fill="#1a1a1a" text-anchor="middle" x="367.1" y="195.70000000000005" textLength="134.6" lengthAdjust="spacingAndGlyphs">Computer-enhanced version</text><text font-family="Liberation Sans, sans-serif" font-size="9.4" font-weight="700" fill="#1a1a1a" text-anchor="middle" x="366.6" y="212.89999999999998" textLength="115.4" lengthAdjust="spacingAndGlyphs">of What-the-dolphin-saw</text></svg></div>
<div class="card" style="left:553px;top:643px;width:493px;height:247px"><svg class="abs" style="left:0;top:0" width="493" height="247" viewBox="0 0 493 247"><rect x="41.8" y="6.9" width="409.2" height="233.2" fill="#060606"/><circle cx="246.60000000000002" cy="123.10000000000002" r="96.4" fill="url(#disc)"/><circle cx="246.60000000000002" cy="123.10000000000002" r="96.4" fill="#000" filter="url(#nzd)" opacity=".4"/><circle cx="246.60000000000002" cy="123.10000000000002" r="96.4" fill="#fff" filter="url(#nzf)" opacity=".2"/><use href="#man" x="150.20" y="26.70" width="192.80" height="192.80" filter="url(#bl3)" opacity="1.0"/><circle cx="246.60000000000002" cy="123.10000000000002" r="92.79" fill="none" stroke="#fff" stroke-width="7.23" filter="url(#nzf)" opacity=".55"/><circle cx="246.60000000000002" cy="123.10000000000002" r="95.80" fill="none" stroke="#d8d8d8" stroke-width="1" opacity=".45"/><path d="M176.6 187.1A95 95 0 0 0 316.6 187.1" fill="none" stroke="#e8e8e8" stroke-width="3" stroke-dasharray="4 2 7 3 2 3" opacity=".8"/><circle cx="310.6" cy="67.1" r="2.6" fill="#eee" opacity=".8" filter="url(#bl1)"/></svg></div>
<div class="fav" style="left:25.7px;top:903px;background:#0a2cf0"><svg width="17" height="17" viewBox="0 0 17 17"><text x="8.5" y="12.5" font-family="Liberation Sans, sans-serif" font-size="10" font-weight="700" fill="#fff" text-anchor="middle">BI</text></svg></div><div class="src" style="left:48.4px;top:902px">Business Insider</div>
<div class="fav" style="left:558.7px;top:903px"><svg width="17" height="17" viewBox="0 0 17 17"><path d="M2.5 0 14 6 2.5 12Z" fill="#d81e2c"/></svg></div><div class="src" style="left:581.4px;top:902px">Global News</div>
<div id="panel"><div class="blk"></div><div class="av"><svg width="44.2" height="44.2" viewBox="0 0 44 44"><text x="22" y="31" font-family="Liberation Serif, serif" font-size="26" font-weight="700" fill="#1a1a1a" text-anchor="middle" textLength="28" lengthAdjust="spacingAndGlyphs">SF</text></svg></div><div class="nm">BBC Science Focus Magazine</div><svg class="abs" style="left:0;top:0" width="744" height="72" viewBox="0 0 744 72"><path d="M525.2 28.2L517.1 36.30000000000001L525.2 44.4" fill="none" stroke="#4b4d52" stroke-width="3.1" stroke-linejoin="miter"/><path d="M583.5 28.2L591.6 36.30000000000001L583.5 44.4" fill="none" stroke="#9aa0a6" stroke-width="3.1" stroke-linejoin="miter"/><circle cx="653.4000000000001" cy="28.10" r="2.8" fill="#9aa0a6"/><circle cx="653.4000000000001" cy="36.45" r="2.8" fill="#9aa0a6"/><circle cx="653.4000000000001" cy="44.80" r="2.8" fill="#9aa0a6"/></svg><svg class="abs" style="left:703.0px;top:20.0px" width="33" height="33" viewBox="0 0 24 24" ><path d="M19 6.41L17.59 5 12 10.59 6.41 5 5 6.41 10.59 12 5 17.59 6.41 19 12 13.41 17.59 19 19 17.59 13.41 12z" fill="#bdc1c6"/></svg><svg class="abs" style="left:35.09999999999991px;top:269.79999999999995px" width="25.6" height="25.4" viewBox="0 0 25.6 25.4" ><g fill="none" stroke-width="3"><path d="M1.5 12.3V9.3A4.6 4.6 0 0 1 6.1 4.7H18" stroke="#fff"/><path d="M17.9 4.7H18.9A4.6 4.6 0 0 1 23.5 9.3V14.2" stroke="#fff"/><path d="M1.5 16.2V18.9A4.6 4.6 0 0 0 6.1 23.5H13.2" stroke="#fff"/></g><path d="M8.5 3.4 10.2 0H16.1L17.8 3.4Z" fill="#fff"/><circle cx="12.5" cy="13.85" r="4.3" fill="#fff"/><circle cx="20.9" cy="20.9" r="3" fill="#fff"/></svg><svg class="abs" style="left:239.1px;top:72px" width="291" height="257" viewBox="0 0 291 256" preserveAspectRatio="none"><use href="#echo" x="0" y="0" width="291" height="256"/></svg><div class="h1">How does echolocation work? - BBC Science Focus<br>Magazine</div><div id="visit"><span>Visit</span><svg class="abs" style="left:62.6px;top:12.6px" width="24.75" height="24.75" viewBox="0 0 24 24" ><path d="M9.4 18 8 16.6l4.6-4.6L8 7.4 9.4 6l6 6z" fill="#202124"/></svg></div><div class="meta" style="top:428px">Get this image on: <b>gettyimages.com</b> | <b>License details</b></div><div class="meta" style="top:450px">Creator: corbac40 | Credit: Getty Images/iStockphoto</div><div class="meta" style="top:478px">Want to know where this information comes from? <b>Learn more</b></div><div class="btn" style="left:23px;width:353.2px"><svg class="abs" style="left:135.3px;top:12.2px" width="24.75" height="24.75" viewBox="0 0 24 24" ><g fill="none" stroke="#c4c7c5" stroke-width="1.7"><circle cx="17.6" cy="5.2" r="2.3"/><circle cx="6" cy="12" r="2.3"/><circle cx="17.6" cy="18.8" r="2.3"/><path d="M8 10.9 15.6 6.3M8 13.1 15.6 17.7"/></g></svg><span style="left:166.4px">Share</span></div><div class="btn" style="left:391.7px;width:353.2px"><svg class="abs" style="left:137.4px;top:12.0px" width="25.6" height="25.6" viewBox="0 0 24 24" ><path d="M17 3H7c-1.1 0-2 .9-2 2v16l7-3 7 3V5c0-1.1-.9-2-2-2zm0 15l-5-2.18L7 18V5h10v13z" fill="#c4c7c5"/></svg><span style="left:170px">Save</span></div></div>
<div id="bot"></div>
</body>
</html>
